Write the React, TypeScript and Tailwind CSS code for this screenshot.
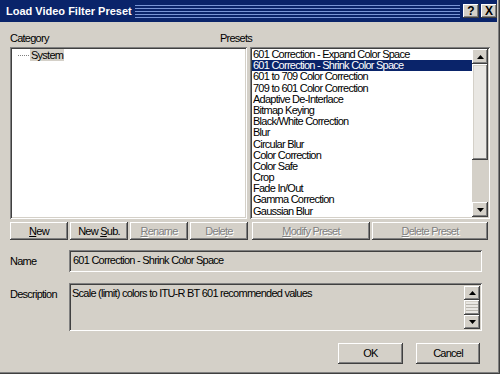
import React from "react";

const sunken =
  "shadow-[inset_1px_1px_0_#808080,inset_-1px_-1px_0_#ffffff,inset_2px_2px_0_#404040,inset_-2px_-2px_0_#d4d0c8]";
const raised =
  "shadow-[inset_-1px_-1px_0_#404040,inset_1px_1px_0_#ffffff,inset_-2px_-2px_0_#808080,inset_2px_2px_0_#d4d0c8]";

const presets = [
  "601 Correction - Expand Color Space",
  "601 Correction - Shrink Color Space",
  "601 to 709 Color Correction",
  "709 to 601 Color Correction",
  "Adaptive De-Interlace",
  "Bitmap Keying",
  "Black/White Correction",
  "Blur",
  "Circular Blur",
  "Color Correction",
  "Color Safe",
  "Crop",
  "Fade In/Out",
  "Gamma Correction",
  "Gaussian Blur",
];

function Arrow({ up }: { up?: boolean }) {
  return (
    <svg width="7" height="4" viewBox="0 0 7 4" className="block">
      {up ? <polygon points="3.5,0 7,4 0,4" fill="#000" /> : <polygon points="0,0 7,0 3.5,4" fill="#000" />}
    </svg>
  );
}

function Btn({
  children,
  disabled,
  className,
}: {
  children: React.ReactNode;
  disabled?: boolean;
  className: string;
}) {
  return (
    <div
      className={`${raised} bg-[#d4d0c8] flex items-center justify-center ${className} ${
        disabled ? "text-[#808080] [text-shadow:1px_1px_0_#ffffff]" : "text-black"
      }`}
    >
      {children}
    </div>
  );
}

export default function App() {
  return (
    <div className="w-[500px] h-[374px] bg-[#d4d0c8] flex flex-col pr-[3px] pb-[2px] shadow-[inset_-1px_-1px_0_#404040,inset_-2px_-2px_0_#808080] font-['Liberation_Sans',Arial,sans-serif] text-[11px] tracking-[-0.75px] text-black overflow-hidden">
      {/* Title bar */}
      <div className="h-[22px] bg-[#0a246a] flex items-center pl-[6px] shrink-0">
        <span className="text-white font-bold tracking-[0px] leading-[14px] whitespace-nowrap">
          Load Video Filter Preset
        </span>
        <div className="flex-1 h-[17px] mx-[3px] bg-[repeating-linear-gradient(to_bottom,#0a246a_0px,#0a246a_2px,#7a96d6_2px,#7a96d6_3px)]" />
        <div className="flex gap-[2px]">
          <div className={`${raised} bg-[#d4d0c8] w-[16px] h-[14px] flex items-center justify-center font-bold text-[12px] leading-[12px] tracking-[0px]`}>
            ?
          </div>
          <div className={`${raised} bg-[#d4d0c8] w-[16px] h-[14px] flex items-center justify-center font-bold text-[12px] leading-[12px] tracking-[0px]`}>
            X
          </div>
        </div>
      </div>

      {/* Body */}
      <div className="flex flex-col pl-[10px] pr-[7px]">
        {/* Labels */}
        <div className="h-[25px] flex pt-[10px] leading-[13px]">
          <div className="w-[210px]">Category</div>
          <div>Presets</div>
        </div>

        {/* Lists */}
        <div className="h-[172px] flex gap-[3px]">
          <div className={`${sunken} bg-white w-[237px] h-full pl-[8px] pt-[2px]`}>
            <div className="flex items-center h-[12px]">
              <span className="w-[11px] border-t border-dotted border-[#808080]" />
              <span className="ml-[1px] px-[1px] bg-[#d4d0c8] leading-[12px]">System</span>
            </div>
          </div>
          <div className={`${sunken} bg-white w-[240px] h-full p-[2px] flex`}>
            <div className="flex-1 flex flex-col overflow-hidden">
              {presets.map((p, i) => (
                <div
                  key={p}
                  className={`h-[11.2px] leading-[11.2px] pl-[1px] whitespace-nowrap shrink-0 ${
                    i === 1 ? "bg-[#0a246a] text-white" : ""
                  }`}
                >
                  {p}
                </div>
              ))}
            </div>
            <div className="w-[16px] h-full flex flex-col">
              <div className={`${raised} bg-[#d4d0c8] h-[15px] flex items-center justify-center`}>
                <Arrow up />
              </div>
              <div className={`${raised} bg-[#e9e7e3] h-[96px]`} />
              <div className="flex-1 bg-[#d4d0c8]" />
              <div className={`${raised} bg-[#d4d0c8] h-[15px] flex items-center justify-center`}>
                <Arrow />
              </div>
            </div>
          </div>
        </div>

        {/* Buttons row */}
        <div className="mt-[3px] h-[18px] flex">
          <div className="flex gap-[2px]">
            <Btn className="w-[58px] h-[18px]">
              <span className="underline">N</span>ew
            </Btn>
            <Btn className="w-[58px] h-[18px]">
              New&nbsp;<span className="underline">S</span>ub.
            </Btn>
            <Btn className="w-[58px] h-[18px]" disabled>
              <span className="underline">R</span>ename
            </Btn>
            <Btn className="w-[58px] h-[18px]" disabled>
              Dele<span className="underline">t</span>e
            </Btn>
          </div>
          <div className="flex gap-[2px] ml-[4px]">
            <Btn className="w-[118px] h-[18px]" disabled>
              <span className="underline">M</span>odify Preset
            </Btn>
            <Btn className="w-[116px] h-[18px]" disabled>
              <span className="underline">D</span>elete Preset
            </Btn>
          </div>
        </div>

        {/* Name */}
        <div className="mt-[10px] h-[22px] flex">
          <div className="w-[59px] flex items-center pt-[1px]">Name</div>
          <div className={`${sunken} bg-[#d4d0c8] w-[413px] h-full flex items-center pl-[4px] pb-[1px]`}>
            601 Correction - Shrink Color Space
          </div>
        </div>

        {/* Description */}
        <div className="mt-[11px] h-[48px] flex">
          <div className="w-[59px] pt-[5px] leading-[13px]">Description</div>
          <div className={`${sunken} bg-[#d4d0c8] w-[413px] h-full flex p-[2px]`}>
            <div className="flex-1 pl-[1px] pt-[2px] leading-[13px]">
              Scale (limit) colors to ITU-R BT 601 recommended values
            </div>
            <div className="w-[16px] h-full flex flex-col pt-[1px]">
              <div className={`${raised} bg-[#d4d0c8] h-[14px] flex items-center justify-center`}>
                <Arrow up />
              </div>
              <div className={`${raised} bg-[#e9e7e3] flex-1 flex flex-col justify-center gap-[2px] px-[2px]`}>
                <div className="h-px bg-[#b8b5ae]" />
                <div className="h-px bg-[#b8b5ae]" />
                <div className="h-px bg-[#b8b5ae]" />
              </div>
              <div className={`${raised} bg-[#d4d0c8] h-[14px] flex items-center justify-center`}>
                <Arrow />
              </div>
            </div>
          </div>
        </div>

        {/* OK / Cancel */}
        <div className="mt-[12px] h-[21px] flex justify-end gap-[13px] mr-[10px]">
          <Btn className="w-[65px] h-[21px]">OK</Btn>
          <Btn className="w-[64px] h-[21px]">Cancel</Btn>
        </div>
      </div>
    </div>
  );
}
